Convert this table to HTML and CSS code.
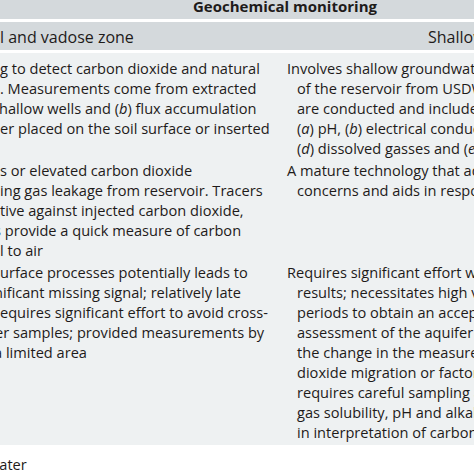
FILE: index.html
```html
<!DOCTYPE html>
<html lang="en">
<head>
<meta charset="utf-8">
<title>Geochemical monitoring</title>
<link rel="stylesheet" href="styles.css">
</head>
<body>
<div class="page">
  <div class="hdr1"><span class="title">Geochemical monitoring</span></div>
  <div class="hdr2">
    <div class="h-c1">l and vadose zone</div>
    <div class="h-c2">Shallow groundwater</div>
  </div>
  <div class="tbody">
    <div class="row">
      <div class="c1">
        <div class="ln">g to detect carbon dioxide and natural</div>
        <div class="ln">. Measurements come from extracted</div>
        <div class="ln"><span class="cut1">h</span>allow wells and (<i>b</i>) flux accumulation</div>
        <div class="ln">er placed on the soil surface or inserted</div>
      </div>
      <div class="c2">
        <div class="ln">Involves shallow groundwater sampling within</div>
        <div class="ln ind">of the reservoir from USDWs. Measurements</div>
        <div class="ln ind">are conducted and include the following:</div>
        <div class="ln ind">(<i>a</i>) pH, (<i>b</i>) electrical conductivity, (<i>c</i>)</div>
        <div class="ln ind">(<i>d</i>) dissolved gasses and (<i>e</i>) isotopes</div>
      </div>
    </div>
    <div class="row">
      <div class="c1">
        <div class="ln">s or elevated carbon dioxide</div>
        <div class="ln">ing gas leakage from reservoir. Tracers</div>
        <div class="ln">tive against injected carbon dioxide,</div>
        <div class="ln"><span class="cut6">s</span> provide a quick measure of carbon</div>
        <div class="ln">l to air</div>
      </div>
      <div class="c2">
        <div class="ln">A mature technology that addresses public</div>
        <div class="ln ind">concerns and aids in response</div>
      </div>
    </div>
    <div class="row">
      <div class="c1">
        <div class="ln">urface processes potentially leads to</div>
        <div class="ln"><span class="cut6">n</span>ificant missing signal; relatively late</div>
        <div class="ln">equires significant effort to avoid cross-</div>
        <div class="ln"><span class="cut5">e</span>r samples; provided measurements by</div>
        <div class="ln"><span class="cut6">a</span> limited area</div>
      </div>
      <div class="c2">
        <div class="ln">Requires significant effort with variable</div>
        <div class="ln ind">results; necessitates high variability</div>
        <div class="ln ind">periods to obtain an acceptable</div>
        <div class="ln ind">assessment of the aquifer chemistry;</div>
        <div class="ln ind">the change in the measured parameters</div>
        <div class="ln ind">dioxide migration or factors such as</div>
        <div class="ln ind">requires careful sampling and analysis</div>
        <div class="ln ind">gas solubility, pH and alkalinity</div>
        <div class="ln ind">in interpretation of carbon dioxide</div>
      </div>
    </div>
  </div>
  <div class="foot"><span class="cut12">w</span>ater</div>
</div>
</body>
</html>
```
FILE: styles.css
```css
html, body {
  margin: 0;
  padding: 0;
  background: #ffffff;
}

.page {
  width: 474px;
  height: 474px;
  overflow: hidden;
  font-family: "Open Sans", "Noto Sans", sans-serif;
  color: #1e1b1a;
}

.hdr1 {
  margin-top: -4px;
  padding-bottom: 3px;
  background: #d4d9dc;
  line-height: 20px;
  font-size: 15px;
  font-weight: 700;
  white-space: nowrap;
}

.title {
  padding-left: 193px;
}

.hdr2 {
  margin-top: 3px;
  display: grid;
  grid-template-columns: 287px 1fr;
  padding: 5px 0 3px;
  background: #d4d9dc;
  font-size: 16px;
  line-height: 20px;
  white-space: nowrap;
}

.h-c2 {
  padding-left: 141px;
}

.tbody {
  margin-top: 3px;
  padding: 4px 0 2px;
  background: #eef1f2;
  font-size: 14.6px;
  line-height: 20px;
}

.row {
  display: grid;
  grid-template-columns: 287px 1fr;
  padding: 1px 0;
}

.ln {
  white-space: nowrap;
}

.ind {
  padding-left: 10px;
}

.cut1 { margin-left: -1px; }
.cut5 { margin-left: -5px; }
.cut6 { margin-left: -6px; }
.cut12 { margin-left: -12px; }

.foot {
  margin-top: 9px;
  font-size: 14.6px;
  line-height: 20px;
  white-space: nowrap;
}
```
